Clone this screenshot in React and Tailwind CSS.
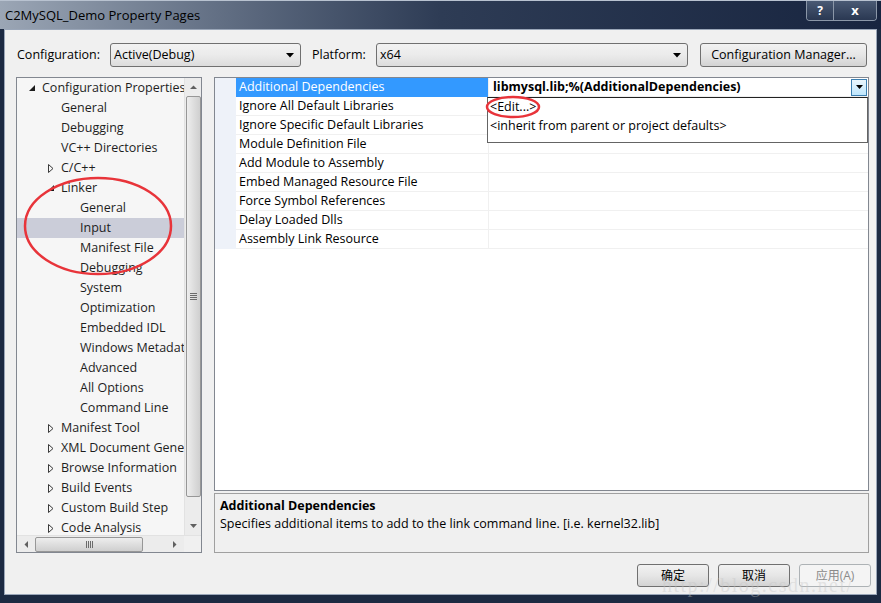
import React from "react";

const treeItems = [
  [0, "Configuration Properties", "open"],
  [1, "General"],
  [1, "Debugging"],
  [1, "VC++ Directories"],
  [1, "C/C++", "closed"],
  [1, "Linker", "open"],
  [2, "General"],
  [2, "Input", null, true],
  [2, "Manifest File"],
  [2, "Debugging"],
  [2, "System"],
  [2, "Optimization"],
  [2, "Embedded IDL"],
  [2, "Windows Metadata"],
  [2, "Advanced"],
  [2, "All Options"],
  [2, "Command Line"],
  [1, "Manifest Tool", "closed"],
  [1, "XML Document Generator", "closed"],
  [1, "Browse Information", "closed"],
  [1, "Build Events", "closed"],
  [1, "Custom Build Step", "closed"],
  [1, "Code Analysis", "closed"],
];

const gridRows = [
  "Additional Dependencies",
  "Ignore All Default Libraries",
  "Ignore Specific Default Libraries",
  "Module Definition File",
  "Add Module to Assembly",
  "Embed Managed Resource File",
  "Force Symbol References",
  "Delay Loaded Dlls",
  "Assembly Link Resource",
];

const indent = ["pl-[8px]", "pl-[27px]", "pl-[46px]"];

function Expander({ state }) {
  if (state === "open") {
    return (
      <svg width="7" height="7" viewBox="0 0 7 7" className="ml-[4px]">
        <polygon points="6,0 6,6 0,6" fill="#1c1c1c" />
      </svg>
    );
  }
  if (state === "closed") {
    return (
      <svg width="6" height="9" viewBox="0 0 6 9" className="ml-[4px]">
        <polygon points="0.5,0.5 5,4.5 0.5,8.5" fill="none" stroke="#3a3a3a" />
      </svg>
    );
  }
  return null;
}

function Arrow({ dir }) {
  const pts = {
    up: "0,4 3.5,0.5 7,4",
    down: "0,0 7,0 3.5,4",
    left: "4,0 4,7 0.5,3.5",
    right: "0,0 0,7 3.5,3.5",
  }[dir];
  const horiz = dir === "left" || dir === "right";
  return (
    <svg width={horiz ? 5 : 7} height={horiz ? 7 : 5} viewBox={horiz ? "0 0 5 7" : "0 0 7 5"}>
      <polygon points={pts} fill="#606060" />
    </svg>
  );
}

function Combo({ width, text }) {
  return (
    <div
      className={`${width} h-[24px] flex items-center justify-between rounded-[3px] border border-[#707070] bg-linear-to-b from-[#f2f2f2] via-[#ebebeb] to-[#dcdcdc] pl-[3px] pr-[6px] text-black`}
    >
      <span>{text}</span>
      <svg width="8" height="5" viewBox="0 0 8 5">
        <polygon points="0,0 8,0 4,4.5" fill="#000" />
      </svg>
    </div>
  );
}

function WinButton({ children, disabled }) {
  return (
    <div
      className={
        disabled
          ? "w-[72px] h-[23px] flex items-center justify-center rounded-[3px] border border-[#adb2b5] bg-[#f4f4f4] text-[12px] text-[#8a8a8a]"
          : "w-[72px] h-[23px] flex items-center justify-center rounded-[3px] border border-[#707070] bg-linear-to-b from-[#f2f2f2] via-[#e6e6e6] to-[#d3d3d3] text-[12px] text-black"
      }
    >
      {children}
    </div>
  );
}

function Tree() {
  return (
    <div className="w-[186px] h-[476px] border border-[#828790] bg-[#f6f6f6] flex flex-col">
      <div className="flex h-[457px]">
        <div className="flex-1 overflow-hidden">
          {treeItems.map(([level, label, state, selected], i) => (
            <div
              key={i}
              className={`h-[20px] flex items-center whitespace-nowrap ${indent[level]} ${
                selected ? "bg-[#cbcdd9]" : ""
              }`}
            >
              <div className="w-[17px] shrink-0 flex items-center">
                <Expander state={state} />
              </div>
              <span className="text-[#1e1e1e]">{label}</span>
            </div>
          ))}
        </div>
        <div className="w-[17px] bg-[#ececec] border-l border-[#e2e2e2] flex flex-col items-center">
          <div className="h-[18px] flex items-center justify-center">
            <Arrow dir="up" />
          </div>
          <div className="w-[15px] h-[401px] rounded-[2px] border border-[#979797] bg-linear-to-r from-[#eeeeee] via-[#dedede] to-[#cfcfcf] flex flex-col items-center justify-center gap-[1px]">
            <div className="w-[7px] h-px bg-[#6b6b6b]" />
            <div className="w-[7px] h-px bg-[#6b6b6b]" />
            <div className="w-[7px] h-px bg-[#6b6b6b]" />
            <div className="w-[7px] h-px bg-[#6b6b6b]" />
          </div>
          <div className="flex-1" />
          <div className="h-[18px] flex items-center justify-center">
            <Arrow dir="down" />
          </div>
        </div>
      </div>
      <div className="flex h-[17px] border-t border-[#e2e2e2]">
        <div className="flex-1 bg-[#ececec] flex items-center">
          <div className="w-[18px] flex justify-center">
            <Arrow dir="left" />
          </div>
          <div className="w-[108px] h-[15px] rounded-[2px] border border-[#979797] bg-linear-to-b from-[#eeeeee] via-[#dedede] to-[#cfcfcf] flex items-center justify-center gap-[1px]">
            <div className="w-px h-[7px] bg-[#6b6b6b]" />
            <div className="w-px h-[7px] bg-[#6b6b6b]" />
            <div className="w-px h-[7px] bg-[#6b6b6b]" />
            <div className="w-px h-[7px] bg-[#6b6b6b]" />
          </div>
          <div className="flex-1" />
          <div className="w-[18px] flex justify-center">
            <Arrow dir="right" />
          </div>
        </div>
        <div className="w-[17px] bg-[#f0f0f0]" />
      </div>
    </div>
  );
}

function Grid() {
  return (
    <div className="relative h-[414px] border border-[#828790] bg-white">
      {gridRows.map((name, i) => (
        <div key={name} className="flex h-[19px]">
          <div className="w-[21px] bg-[#eef2f9]" />
          <div
            className={`w-[252px] flex items-center pl-[3px] pt-px border-b ${
              i === 0 ? "bg-[#3399ff] text-white border-[#3399ff]" : "text-black border-[#f0f0f0]"
            }`}
          >
            {name}
          </div>
          <div className="flex-1 flex items-center justify-between border-l border-b border-[#f0f0f0] pl-[4px]">
            {i === 0 && (
              <>
                <span className="pt-px font-bold text-black">libmysql.lib;%(AdditionalDependencies)</span>
                <div className="w-[16px] h-[17px] mr-px border border-[#3c7fb1] bg-linear-to-b from-[#eaf6fd] to-[#bee6fd] flex items-center justify-center">
                  <svg width="7" height="4" viewBox="0 0 7 4">
                    <polygon points="0,0 7,0 3.5,4" fill="#000" />
                  </svg>
                </div>
              </>
            )}
          </div>
        </div>
      ))}
      <div className="absolute left-[272px] top-[19px] w-[381px] h-[46px] bg-white border border-[#646464] border-t-[#222] border-t-dotted text-black">
        <div className="h-[19px] flex items-center pl-[2px]">&lt;Edit...&gt;</div>
        <div className="h-[19px] flex items-center pl-[2px]">&lt;inherit from parent or project defaults&gt;</div>
      </div>
    </div>
  );
}

export default function App() {
  return (
    <div className="relative w-[881px] h-[603px] overflow-hidden bg-[#1c2a42] text-[12.5px] font-['Open_Sans','Noto_Sans_CJK_SC',sans-serif]">
      <div className="h-[29px] flex justify-between border-t border-[#b8c2d0] bg-linear-to-r from-[#9ba6b5] via-[#2e3c55] to-[#182540]">
        <div className="pl-[5px] pt-[5px] text-[13px] text-black">C2MySQL_Demo Property Pages</div>
        <div className="flex h-[20px] mr-[4px] rounded-b-[4px] border border-t-0 border-[#8b97a8] overflow-hidden">
          <div className="w-[27px] flex items-center justify-center bg-linear-to-b from-[#4a5a74] to-[#2a3852] text-white text-[12px] font-bold border-r border-[#8b97a8]">
            ?
          </div>
          <div className="w-[42px] flex items-center justify-center bg-linear-to-b from-[#4a5a74] to-[#2a3852] text-white text-[13px] font-bold">
            x
          </div>
        </div>
      </div>

      <div className="mx-[4px] h-[566px] border border-[#9aa6b8] bg-[#f0f0f0] flex flex-col">
        <div className="mt-[13px] pl-[12px] flex items-center h-[24px] text-black">
          <span className="w-[93px]">Configuration:</span>
          <Combo width="w-[191px]" text="Active(Debug)" />
          <span className="ml-[11px] w-[64px]">Platform:</span>
          <Combo width="w-[312px]" text="x64" />
          <div className="ml-[12px] w-[167px] h-[24px] flex items-center justify-center rounded-[3px] border border-[#707070] bg-linear-to-b from-[#f2f2f2] via-[#e6e6e6] to-[#d3d3d3]">
            Configuration Manager...
          </div>
        </div>

        <div className="mt-[10px] pl-[11px] flex">
          <Tree />
          <div className="ml-[12px] w-[655px] flex flex-col">
            <Grid />
            <div className="mt-[2px] h-[60px] border border-[#a0a0a0] bg-[#f0f0f0] pl-[5px] pt-[3px] text-black">
              <div className="h-[18px] font-bold">Additional Dependencies</div>
              <div className="h-[18px]">Specifies additional items to add to the link command line. [i.e. kernel32.lib]</div>
            </div>
          </div>
        </div>

        <div className="mt-[11px] pr-[5px] flex justify-end gap-[9px]">
          <WinButton>确定</WinButton>
          <WinButton>取消</WinButton>
          <WinButton disabled>应用(A)</WinButton>
        </div>
      </div>

      <svg className="absolute inset-0 pointer-events-none" width="881" height="603">
        <ellipse cx="98" cy="226" rx="73" ry="48" fill="none" stroke="#e8343a" strokeWidth="2.5" />
        <ellipse cx="513" cy="107" rx="26" ry="10" fill="none" stroke="#e8343a" strokeWidth="2.5" />
      </svg>
      <div className="absolute left-[662px] top-[570px] text-[20px] tracking-[1.5px] text-[#c4c4c4]/40 font-['Liberation_Serif',serif] pointer-events-none">
        http://blog.csdn.net/
      </div>
    </div>
  );
}
